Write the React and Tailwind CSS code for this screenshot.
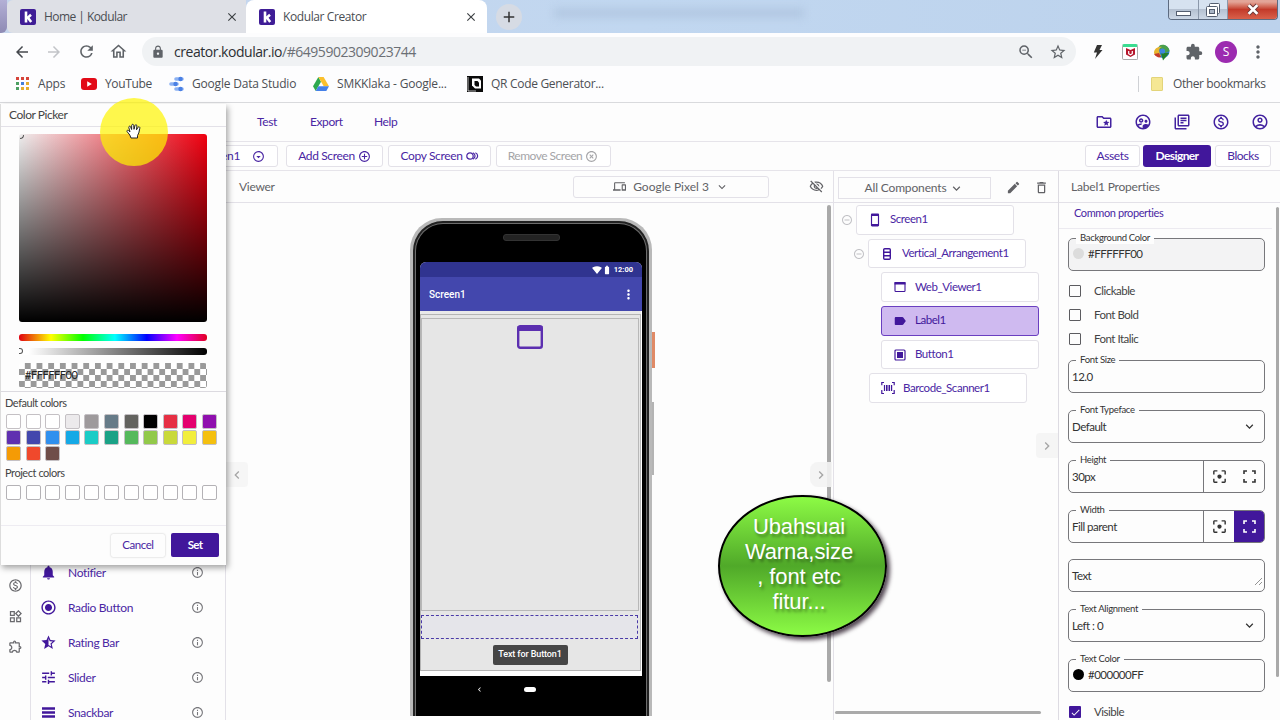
import React from "react";
import {
  MdArrowBack, MdArrowForward, MdRefresh, MdOutlineHome, MdLock, MdOutlineZoomOut, MdStarBorder, MdExtension, MdMoreVert,
  MdOutlineFolderSpecial, MdOutlineSupervisedUserCircle, MdOutlineLibraryBooks, MdOutlineMonetizationOn, MdOutlineAccountCircle,
  MdOutlineAddCircleOutline, MdOutlineArrowDropDownCircle, MdHighlightOff, MdDevices, MdKeyboardArrowDown, MdOutlineVisibilityOff,
  MdEdit, MdDeleteOutline, MdRemoveCircleOutline, MdStayCurrentPortrait, MdLabel, MdFilterCenterFocus,
  MdOutlineWidgets, MdOutlineExtension, MdNotifications, MdRadioButtonChecked, MdStarHalf, MdTune, MdOutlineInfo,
  MdChevronLeft, MdChevronRight, MdClose, MdAdd, MdSignalWifi4Bar, MdBatteryFull, MdCheck,
} from "react-icons/md";

const chromeFont = "font-['Open_Sans','Noto_Sans',sans-serif]";
const appFont = "font-['Lato','Open_Sans',sans-serif]";

function KLogo() {
  return (
    <svg width="16" height="16" viewBox="0 0 16 16" className="shrink-0">
      <rect width="16" height="16" rx="2" fill="#3f1d96" />
      <path d="M6 2.500v11M11 5.800 7 9.400M8 8.800l3.200 4.200" stroke="#fff" strokeWidth="2.600" fill="none" />
    </svg>
  );
}

function TabBar() {
  return (
    <div className="flex h-[33px] shrink-0 bg-linear-to-r from-[#c6d5ec] via-[#c1d7f0] to-[#bcd2ec]">
      <div className="h-[33px] w-[7px] rounded-br-md bg-linear-to-b from-[#b3b0d6] to-[#8f8bb4]" />
      <div className="flex w-[239px] items-center rounded-l-md bg-[#dee0e6] pl-[13px] pr-[7px]">
        <KLogo />
        <span className="ml-2 flex-1 text-[12px] text-[#4a4d52] tracking-[-0.550px]">Home | Kodular</span>
        <MdClose className="size-[14px] text-[#3c4043]" />
      </div>
      <div className="flex w-[241px] items-center rounded-t-lg bg-white pl-[13px] pr-[9px]">
        <KLogo />
        <span className="ml-2 flex-1 text-[12px] text-[#4a4d52] tracking-[-0.400px]">Kodular Creator</span>
        <MdClose className="size-[14px] text-[#3c4043]" />
      </div>
      <div className="ml-[9px] mt-[4px] flex size-[26px] items-center justify-center rounded-full bg-[#d6dbe4]">
        <MdAdd className="size-[18px] text-[#333]" />
      </div>
      <div className="ml-[32px] mt-[9px] h-[8px] w-[250px] bg-[#9fb6d2]/50 blur-[4px]" />
      <div className="ml-auto mr-[2px] flex h-[20px] overflow-hidden rounded-b-[4px] border border-t-0 border-[#5d6b80]">
        <div className="flex w-[30px] items-end justify-center border-r border-[#8b98aa] bg-linear-to-b from-[#d6e2f0] from-45% via-[#b5c1d1] via-50% to-[#cdd8e6] pb-[3px]">
          <div className="h-[5px] w-[15px] border border-[#555f70] bg-white" />
        </div>
        <div className="flex w-[29px] items-center justify-center border-r border-[#8b98aa] bg-linear-to-b from-[#d6e2f0] from-45% via-[#b5c1d1] via-50% to-[#cdd8e6]">
          <svg width="16" height="16" viewBox="0 0 16 16" fill="#fff" stroke="#555f70">
            <rect x="4.500" y="1.500" width="10" height="10" rx="1" />
            <rect x="1.500" y="4.500" width="11" height="10" rx="1" />
            <rect x="4.500" y="7.500" width="5" height="4" fill="#aab6c6" />
          </svg>
        </div>
        <div className="flex w-[49px] items-center justify-center bg-linear-to-b from-[#e3a598] from-10% via-[#c33a2a] via-50% to-[#d9604a]">
          <svg width="14" height="13" viewBox="0 0 16 14">
            <path d="M3 2l10 10M13 2 3 12" stroke="#6b3a3a" strokeWidth="5" />
            <path d="M3 2l10 10M13 2 3 12" stroke="#fff" strokeWidth="3.200" />
          </svg>
        </div>
      </div>
    </div>
  );
}

function AddressBar() {
  return (
    <div className="flex h-[37px] shrink-0 items-center bg-[#fdfdfe] text-[#5f6368]">
      <MdArrowBack className="ml-[13px] size-[18px] text-[#45484d]" />
      <MdArrowForward className="ml-[14px] size-[18px] text-[#c2c4c8]" />
      <MdRefresh className="ml-[14px] size-[19px]" />
      <MdOutlineHome className="ml-[13px] size-[19px]" />
      <div className="ml-[14px] flex h-[29px] w-[934px] items-center rounded-full bg-[#f0f2f4] pl-[9px] pr-[9px]">
        <MdLock className="size-[14px]" />
        <span className="ml-[9px] flex-1 text-[14px] tracking-[-0.470px] text-[#6b6f75]">
          <span className="text-[#2c2f33]">creator.kodular.io</span>/#6495902309023744
        </span>
        <MdOutlineZoomOut className="size-[18px]" />
        <MdStarBorder className="ml-[14px] size-[18px]" />
      </div>
      <svg width="10" height="14" viewBox="0 0 10 14" className="ml-[17px]"><path d="M4 0h5L6.500 5H9.500L2 14 4 7.500H.8z" fill="#333" /></svg>
      <div className="ml-[19px] flex h-[16px] w-[16px] items-center justify-center rounded-[2px] border border-t-[3px] border-[#aaa] border-t-[#3bdc91] bg-white">
        <svg width="9" height="9" viewBox="0 0 9 9"><path d="M0 0l4.500 2L9 0v6.500L4.500 9 0 6.500z" fill="#b5172c" /><path d="M2.700 3v2.700l1.800 1 1.800-1V3" stroke="#fff" strokeWidth="1.200" fill="none" /></svg>
      </div>
      <svg width="18" height="18" viewBox="0 0 18 18" className="ml-[15px]">
        <circle cx="10" cy="8.500" r="6.500" fill="#2f7fc6" />
        <path d="M6 3c4-3 10 0 10.500 5l-4 2-5-4z" fill="#4aa04a" />
        <path d="M8 10h8l-6 7.500z" fill="#238029" />
        <path d="M1 10c0-5 5-7 8-6-4 1-3 5-1 9-3 1-6 0-7-3z" fill="#e8b62e" />
        <path d="M1 11c2 3 5 4 7 3l-2-4z" fill="#c33a2a" />
        <circle cx="9.500" cy="8" r="2.600" fill="#3f86dd" />
      </svg>
      <MdExtension className="ml-[14px] size-[18px]" />
      <div className="ml-[12px] flex size-[22px] items-center justify-center rounded-full bg-[#9c2bb0] text-[12px] text-white">S</div>
      <MdMoreVert className="ml-[11px] size-[20px]" />
    </div>
  );
}

function Bookmarks() {
  const dots = ["#d6443a", "#d6443a", "#d6443a", "#4c9f62", "#4480d9", "#e4ad2d", "#4c9f62", "#e4ad2d", "#e4ad2d"];
  return (
    <div className="flex h-[33px] shrink-0 items-center border-b border-[#d9dadd] bg-[#fdfdfe] pb-[5px] text-[12px] tracking-[-0.200px] text-[#4c4f54]">
      <div className="ml-[16px] grid w-[13px] grid-cols-3 gap-[2px]">
        {dots.map((c, i) => <div key={i} className="size-[3px]" style={{ background: c }} />)}
      </div>
      <span className="ml-[9px] w-[43px]">Apps</span>
      <svg width="16" height="12" viewBox="0 0 16 12"><rect width="16" height="12" rx="3" fill="#e20a17" /><path d="M6.200 3.300v5.400L10.800 6z" fill="#fff" /></svg>
      <span className="ml-[8px] w-[63px] tracking-[-0.350px]">YouTube</span>
      <svg width="16" height="16" viewBox="0 0 16 16">
        <path d="M8 3h6M3 8h6M8 13h6" stroke="#8cb1f2" strokeWidth="3.600" strokeLinecap="round" />
        <circle cx="12.500" cy="3" r="2.200" fill="#4a80e4" /><circle cx="7.500" cy="8" r="2.200" fill="#4a80e4" /><circle cx="12.500" cy="13" r="2.200" fill="#4a80e4" />
      </svg>
      <span className="ml-[8px] w-[121px]">Google Data Studio</span>
      <svg width="16" height="14" viewBox="0 0 16 14"><path d="M5.400 0 0 9.300 2.700 14 8 4.700z" fill="#2da94f" /><path d="M5.400 0h5.200L16 9.300h-5.300z" fill="#fbc02d" /><path d="M5.400 9.300H16L13.300 14H2.700z" fill="#4480e8" /></svg>
      <span className="ml-[8px] w-[130px]">SMKKlaka - Google...</span>
      <svg width="16" height="16" viewBox="0 0 16 16"><rect width="16" height="16" fill="#0a0a0a" /><path d="M5 2.500h7l2 2v8H8l-3-3z" fill="#fff" /><path d="M7.500 5h3L12 6.500v4H9L7.500 9z" fill="#0a0a0a" /><path d="M1 1v14h8" fill="none" stroke="#fff" strokeWidth=".7" /></svg>
      <span className="ml-[8px] tracking-[-0.300px]">QR Code Generator...</span>
      <div className="ml-auto h-[16px] w-px bg-[#cfd1d5]" />
      <div className="ml-[12px] h-[14px] w-[12px] rounded-[1px] border border-[#e3d47a] bg-[#f5e794]" />
      <span className="ml-[10px] w-[107px] tracking-[-0.400px]">Other bookmarks</span>
    </div>
  );
}

function MenuBar() {
  return (
    <div className="flex h-[39px] shrink-0 items-center border-b border-[#e6e4ea] pl-[257px] text-[12px] tracking-[-0.400px] text-[#4a26a3]">
      <span className="mb-px w-[53px]">Test</span>
      <span className="mb-px w-[64px]">Export</span>
      <span className="mb-px">Help</span>
      <div className="ml-auto flex gap-[21px] pr-[11px] text-[#4322a0]">
        <MdOutlineFolderSpecial className="size-[18px]" />
        <MdOutlineSupervisedUserCircle className="size-[18px]" />
        <MdOutlineLibraryBooks className="size-[18px]" />
        <MdOutlineMonetizationOn className="size-[18px]" />
        <MdOutlineAccountCircle className="size-[18px]" />
      </div>
    </div>
  );
}

function ToolBar() {
  const b = "flex h-[22px] items-center justify-center gap-[3px] rounded-[3px] border border-[#e3e1e8] bg-white";
  return (
    <div className="flex h-[29px] shrink-0 items-center border-b border-[#e6e4ea] text-[12px] tracking-[-0.350px] text-[#4a26a3]">
      <div className={`${b} ml-[150px] w-[128px] justify-end gap-[12px]! pr-[12px]`}>Screen1<MdOutlineArrowDropDownCircle className="size-[13px]" /></div>
      <div className={`${b} ml-[8px] w-[97px]`}>Add Screen<MdOutlineAddCircleOutline className="size-[13px]" /></div>
      <div className={`${b} ml-[5px] w-[103px]`}>Copy Screen
        <svg width="13" height="12" viewBox="0 0 13 12" fill="none" stroke="currentColor" strokeWidth="1.200"><circle cx="4" cy="6" r="3.200" /><path d="M6.800 2.800c3 1.300 3 5.100 0 6.400M9.400 2.800c3 1.300 3 5.100 0 6.400" /></svg>
      </div>
      <div className={`${b} ml-[5px] w-[115px] pr-[1px] text-[#a5a5a8] tracking-[-0.500px]!`}>Remove Screen<MdHighlightOff className="size-[13px]" /></div>
      <div className={`${b} ml-auto w-[55px]`}>Assets</div>
      <div className="ml-[3px] flex h-[22px] w-[68px] items-center justify-center rounded-[3px] bg-[#41179b] font-bold tracking-[-0.600px] text-white">Designer</div>
      <div className={`${b} ml-[4px] mr-[9px] w-[56px] tracking-[-0.500px]!`}>Blocks</div>
    </div>
  );
}

function BarsIcon() {
  return <svg width="17" height="17" viewBox="0 0 17 17" stroke="#41179b" strokeWidth="2.400"><path d="M2 4.500h13M2 8.500h13M2 12.500h13" /></svg>;
}

function Palette() {
  const rows = [
    [MdNotifications, "Notifier"], [MdRadioButtonChecked, "Radio Button"], [MdStarHalf, "Rating Bar"], [MdTune, "Slider"], [BarsIcon, "Snackbar"],
  ];
  return (
    <div className="flex w-[226px] shrink-0 overflow-hidden border-r border-[#e3e1e8]">
      <div className="flex w-[31px] shrink-0 flex-col items-center gap-[15.500px] border-r border-[#e3e1e8] pt-[407px] text-[#6a6a6e]">
        <MdOutlineMonetizationOn className="size-[15px] shrink-0" />
        <MdOutlineWidgets className="size-[15px] shrink-0" />
        <MdOutlineExtension className="size-[15px] shrink-0" />
      </div>
      <div className="flex flex-1 flex-col pt-[384px]">
        {rows.map(([Icon, name]) => (
          <div key={name} className="flex h-[35px] shrink-0 items-center pl-[9px] pr-[21px] text-[12px] leading-[14px] tracking-[-0.350px] text-[#4a26a3]">
            <Icon className="size-[17px] text-[#41179b]" />
            <span className="ml-[11px] flex-1">{name}</span>
            <MdOutlineInfo className="size-[13px] text-[#77777b]" />
          </div>
        ))}
      </div>
    </div>
  );
}

function Phone() {
  return (
    <div className="relative ml-[184px] h-[498px] w-[242px] shrink-0 rounded-t-[32px] bg-[#b9b9b9] p-[3px] pb-0">
      <div className="absolute left-[242px] top-[114px] h-[36px] w-[3px] bg-[#e08a66]" />
      <div className="absolute left-[242px] top-[184px] h-[73px] w-[2px] bg-[#b4b4b4]" />
      <div className="h-full rounded-t-[30px] bg-[#222] p-[2px] pb-0">
        <div className="h-full rounded-t-[28px] bg-[#6d6d6d] p-px pb-0">
          <div className="h-full rounded-t-[27px] bg-black px-[4px]">
            <div className="flex h-[38px] justify-center pt-[10px]"><div className="h-[7px] w-[57px] rounded-[3px] border border-[#333] bg-[#232323]" /></div>
            <div className="w-[222px] overflow-hidden rounded-t-[6px] bg-[#e9e9e9] text-white">
              <div className="flex h-[15px] items-center justify-end bg-[#303490] pr-[9px] pt-px text-[7.500px] font-bold">
                <MdSignalWifi4Bar className="size-[10px]" /><MdBatteryFull className="mr-[2px] size-[10px]" /><span className="font-['Roboto',sans-serif]">12:00</span>
              </div>
              <div className="flex h-[34px] items-center justify-between bg-[#4347ad] pl-[9px] pr-[6px] font-['Roboto',sans-serif] text-[10px] font-medium">
                Screen1<MdMoreVert className="size-[15px]" />
              </div>
              <div className="h-[365px] border-r border-white pt-[3px]">
                <div className="flex h-[357px] flex-col items-center border border-[#b4b4b4] bg-[#e6e6e6] pt-[3px]">
                  <div className="mr-px flex h-[293px] w-[218px] justify-center border border-[#b8b8b8] bg-[#e6e6e6] pt-[5px]">
                    <svg width="28" height="26" viewBox="0 0 28 26"><rect x="2.200" y="2.200" width="23.600" height="21.600" rx="2" fill="none" stroke="#5c2fb0" strokeWidth="2.400" /><path d="M1.500 2h25v5h-25z" fill="#5c2fb0" /></svg>
                  </div>
                  <div className="mr-[2px] mt-[4px] h-[24px] w-[217px] border border-dashed border-[#4a3aa8] bg-[#e5e5ea]" />
                  <div className="mr-px mt-[6px] flex h-[20px] w-[75px] items-center justify-center rounded-[2px] bg-[#454545] font-['Roboto',sans-serif] text-[9px] font-medium tracking-[-0.100px]">Text for Button1</div>
                </div>
                <div className="h-[5px] bg-white" />
              </div>
            </div>
            <div className="flex h-[26px] items-center pl-[55px] text-white">
              <MdChevronLeft className="size-[9px]" />
              <div className="ml-[40px] h-[5px] w-[12px] rounded-full bg-white" />
            </div>
          </div>
        </div>
      </div>
    </div>
  );
}

function Viewer() {
  return (
    <div className="relative flex w-[608px] shrink-0 flex-col overflow-hidden border-r border-[#e3e1e8]">
      <div className="flex h-[32px] shrink-0 items-center border-b border-[#e3e1e8] pl-[13px] text-[12px] text-[#626266]">
        <span className="w-[334px] tracking-[-0.300px]">Viewer</span>
        <div className="flex h-[22px] w-[196px] items-center justify-center rounded-[3px] border border-[#e3e1e8]">
          <MdDevices className="mr-[7px] size-[13px]" />Google Pixel 3<MdKeyboardArrowDown className="ml-[6px] size-[14px]" />
        </div>
        <MdOutlineVisibilityOff className="ml-[40px] size-[15px]" />
      </div>
      <div className="flex flex-1 flex-col overflow-hidden pt-[15px]"><Phone /></div>
      <div className="absolute left-[601px] top-[34px] h-[477px] w-[4px] rounded bg-[#a9a9a9]" />
      <div className="absolute left-0 top-[291px] flex h-[25px] w-[22px] items-center justify-center rounded-r bg-[#f6f6f6]"><MdChevronLeft className="size-[16px] text-[#a5a5a5]" /></div>
      <div className="absolute left-[584px] top-[291px] flex h-[25px] w-[22px] items-center justify-center rounded-l-lg bg-[#f3f3f3]/90"><MdChevronRight className="size-[16px] text-[#a5a5a5]" /></div>
    </div>
  );
}

function VerticalIcon() {
  return <svg width="14" height="14" viewBox="0 0 14 14" fill="none" stroke="#41179b" strokeWidth="1.400" className="shrink-0"><rect x="3.700" y="1.700" width="6.600" height="10.600" rx="1" /><path d="M4 5.200h6M4 8.800h6" /></svg>;
}
function WebIcon() {
  return <svg width="14" height="14" viewBox="0 0 14 14" className="shrink-0"><rect x="2" y="2.500" width="10" height="9" rx=".8" fill="none" stroke="#41179b" strokeWidth="1.100" /><path d="M1.500 2h11v2.500h-11z" fill="#41179b" /></svg>;
}
function ButtonIcon() {
  return <svg width="14" height="14" viewBox="0 0 14 14" className="shrink-0"><rect x="2" y="2" width="10" height="10" rx="1" fill="none" stroke="#41179b" strokeWidth="1.200" /><path d="M4 4h6v6H4z" fill="#41179b" /></svg>;
}
function BarcodeIcon() {
  return <svg width="14" height="14" viewBox="0 0 14 14" fill="none" stroke="#41179b" className="shrink-0"><path d="M3 1.500H.8v11H3M11 1.500h2.200v11H11" strokeWidth="1.200" strokeDasharray="5 4.700 5.700 0" /><path d="M3.500 4v6M10.600 4v6" strokeWidth="1.200" /><path d="M5.800 4v6M8.300 4v6" strokeWidth="1.600" /></svg>;
}

function Tree() {
  const items = [
    [22, MdStayCurrentPortrait, "Screen1", true, false],
    [34, VerticalIcon, "Vertical_Arrangement1", true, false],
    [47, WebIcon, "Web_Viewer1", false, false],
    [47, MdLabel, "Label1", false, true],
    [47, ButtonIcon, "Button1", false, false],
    [35, BarcodeIcon, "Barcode_Scanner1", false, false],
  ];
  return (
    <div className="relative flex w-[225px] shrink-0 flex-col border-r border-[#dddbe2]">
      <div className="flex h-[32px] shrink-0 items-center border-b border-[#e3e1e8] pl-[4px] text-[12px] tracking-[-0.150px] text-[#626266]">
        <div className="mt-[3px] flex h-[22px] w-[153px] items-center justify-center border border-[#e3e1e8]">All Components<MdKeyboardArrowDown className="ml-[3px] size-[15px]" /></div>
        <MdEdit className="ml-[15px] mt-[2px] size-[15px]" />
        <MdDeleteOutline className="ml-[13px] mt-[2px] size-[15px]" />
      </div>
      <div className="flex flex-col gap-[4px] pt-[2px]">
        {items.map(([x, Icon, name, toggle, on]) => (
          <div key={name} className="flex items-center" style={{ paddingLeft: toggle ? x - 15 : x }}>
            {toggle && <MdRemoveCircleOutline className="mr-[3px] size-[12px] text-[#c2c2c6]" />}
            <div className={on
              ? "flex h-[29.700px] w-[158px] items-center rounded-[3px] border border-[#6a3fc0] bg-[#cfbaf0] pl-[11px] text-[11.500px] tracking-[-0.450px] text-[#41179b]"
              : "flex h-[29.700px] w-[158px] items-center rounded-[3px] border border-[#e3e1e8] bg-white pl-[11px] text-[11.500px] tracking-[-0.450px] text-[#4a26a3]"}>
              <Icon className="size-[14px] shrink-0 text-[#41179b]" />
              <span className="mb-[2px] ml-[8px]">{name}</span>
            </div>
          </div>
        ))}
      </div>
      <div className="absolute left-[1px] top-[540px] h-[3px] w-[206px] rounded bg-[#a9a9a9]" />
      <div className="absolute left-[202px] top-[262px] flex h-[25px] w-[22px] items-center justify-center rounded-l bg-[#f5f5f5]"><MdChevronRight className="size-[16px] text-[#a5a5a5]" /></div>
    </div>
  );
}

function Field({ label, children, gap, tint }) {
  return (
    <div className={`relative flex h-[33px] w-[197px] shrink-0 items-center rounded-[5px] border border-[#77777b] pl-[3px] text-[#333] ${tint ? "bg-[#f3f3f4]" : ""}`} style={{ marginTop: gap }}>
      {label && <span className="absolute -top-[7px] left-[7px] bg-[#fdfdfd] px-[4px] text-[9.500px] leading-[12px] tracking-[-0.300px]">{label}</span>}
      {children}
    </div>
  );
}

function Check({ on, label }) {
  return (
    <div className="flex h-[24px] shrink-0 items-center text-[11.500px] leading-[14px] text-[#444]">
      {on
        ? <div className="ml-px flex size-[12px] items-center justify-center rounded-[1px] bg-[#41179b]"><MdCheck className="size-[11px] text-white" /></div>
        : <div className="ml-px size-[12px] rounded-[1px] border-[1.500px] border-[#5c5c60]" />}
      <span className="ml-[13px]">{label}</span>
    </div>
  );
}

function CornersIcon() {
  return <svg width="17" height="17" viewBox="0 0 17 17" fill="none" stroke="currentColor" strokeWidth="1.600"><path d="M6 3H3v3M11 3h3v3M6 14H3v-3M11 14h3v-3" /></svg>;
}

function SizeButtons({ fill }) {
  return (
    <div className="ml-auto flex h-full">
      <div className="flex w-[31px] items-center justify-center border-l border-[#77777b]"><MdFilterCenterFocus className="size-[17px]" /></div>
      <div className={fill ? "flex w-[30px] items-center justify-center rounded-r-[4px] bg-[#41179b] text-white" : "flex w-[30px] items-center justify-center"}><CornersIcon /></div>
    </div>
  );
}

function Properties() {
  return (
    <div className="relative flex flex-1 flex-col overflow-hidden text-[11.500px]">
      <div className="flex h-[32px] shrink-0 items-center border-b border-[#e3e1e8] pl-[12px] text-[12px] tracking-[-0.200px] text-[#626266]">Label1 Properties</div>
      <div className="mr-[8px] flex h-[26px] shrink-0 items-center border-b border-[#eceaf0] pb-[5px] pl-[15px] text-[11px] tracking-[-0.400px] text-[#4a26a3]">Common properties</div>
      <div className="flex flex-col pl-[9px] tracking-[-0.500px]">
        <Field label="Background Color" gap={9} tint><span className="mb-[2px] ml-px flex items-center"><span className="mr-[4px] size-[11px] rounded-full bg-[#dcdcdc]" />#FFFFFF00</span></Field>
        <div className="mt-[8px] flex flex-col"><Check label="Clickable" /><Check label="Font Bold" /><Check label="Font Italic" /></div>
        <Field label="Font Size" gap={9}>12.0</Field>
        <Field label="Font Typeface" gap={17}>Default<MdKeyboardArrowDown className="ml-auto mr-[7px] size-[15px]" /></Field>
        <Field label="Height" gap={17}>30px<SizeButtons /></Field>
        <Field label="Width" gap={17}>Fill parent<SizeButtons fill /></Field>
        <Field gap={16}>Text
          <svg width="9" height="9" viewBox="0 0 9 9" className="ml-auto mr-px mt-[12px]" stroke="#777" strokeWidth=".8"><path d="M1 8l7-7M5 8l3-3" /></svg>
        </Field>
        <Field label="Text Alignment" gap={17}>Left : 0<MdKeyboardArrowDown className="ml-auto mr-[7px] size-[15px]" /></Field>
        <Field label="Text Color" gap={17}><span className="mb-[2px] ml-px flex items-center"><span className="mr-[4px] size-[11px] rounded-full bg-black" />#000000FF</span></Field>
        <div className="mt-[8px]"><Check on label="Visible" /></div>
      </div>
      <div className="absolute left-[217px] top-[36px] h-[470px] w-[3px] rounded bg-[#a9a9a9]" />
    </div>
  );
}

function ColorPicker() {
  const colors = ["#fff", "#fff", "#fff", "#eceaec", "#9e9a9c", "#667b88", "#63635f", "#000", "#e62f44", "#e4006e", "#8f0fae",
    "#6030b0", "#4347ad", "#3090ee", "#15a9e6", "#1accc6", "#1aa286", "#55b95c", "#92c94a", "#c9d93a", "#f2ee3c", "#f4c00f",
    "#f59b05", "#f0492c", "#6f4d49"];
  return (
    <div className="absolute left-0 top-[104px] flex h-[461px] w-[226px] flex-col border-l border-[#ddd] bg-[#fdfdfd] tracking-[-0.450px] text-[#444] shadow-[2px_3px_6px_rgba(0,0,0,0.35)]">
      <div className="flex h-[23px] shrink-0 items-center border-b border-[#e3e1e8] pl-[8px] text-[12px]">Color Picker</div>
      <div className="mt-[7px] ml-[18px] h-[188px] w-[188px] shrink-0 rounded-[3px] bg-[linear-gradient(to_top,#000,transparent),linear-gradient(to_right,#eee,#f00010)]">
        <div className="mt-px ml-px size-[4px] rounded-br-full border-b border-r border-[#555]" />
      </div>
      <div className="mt-[12px] ml-[18px] h-[7px] w-[188px] shrink-0 rounded-[3px] bg-[linear-gradient(to_right,#e00010,#ff0_17%,#0f0_34%,#0ff_51%,#00f_68%,#f0f_84%,#e00020)]" />
      <div className="mt-[7px] ml-[18px] h-[7px] w-[188px] shrink-0 rounded-[3px] bg-[linear-gradient(to_right,#fff_5%,#000)]">
        <div className="h-[6px] w-[4px] rounded-r-full border-y border-r border-[#555]" />
      </div>
      <div className="mt-[8px] ml-[18px] flex h-[25px] w-[188px] shrink-0 items-center rounded-[3px] bg-[repeating-conic-gradient(#9a9a9a_0_25%,#fff_0_50%)] bg-[length:11.700px_12px] pl-[6px] text-[11px] text-[#222]">#FFFFFF00</div>
      <div className="mt-[3px] border-t border-[#dcdae0] pl-[4px] pt-[4px] text-[11px] leading-[14px]">Default colors</div>
      <div className="ml-[5px] mt-[4px] grid w-[215.600px] grid-cols-11 gap-y-[1px]">
        {colors.map((c, i) => <div key={i} className="size-[15px] rounded-[2px] border border-[#c4c0c4]" style={{ background: c }} />)}
      </div>
      <div className="mt-[5px] pl-[4px] text-[11px] leading-[14px]">Project colors</div>
      <div className="ml-[5px] mt-[5px] grid w-[215.600px] grid-cols-11">
        {Array.from({ length: 11 }, (_, i) => <div key={i} className="size-[15px] rounded-[2px] border border-[#b4b2b6] bg-white" />)}
      </div>
      <div className="mt-auto flex h-[40px] shrink-0 items-center justify-end gap-[6px] border-t border-[#eeecf2] pb-px pr-[7px] text-[11.500px]">
        <div className="flex h-[23px] w-[54px] items-center justify-center rounded-[2px] text-[#4a26a3] shadow-[0_0_2px_rgba(0,0,0,0.25)]">Cancel</div>
        <div className="flex h-[24px] w-[48px] items-center justify-center rounded-[2px] bg-[#41179b] font-bold tracking-[-0.700px] text-white">Set</div>
      </div>
      <div className="absolute left-[99px] -top-[6px] size-[68px] rounded-full bg-[#fff500]/70" />
      <svg width="16" height="16" viewBox="0 0 16 16" className="absolute left-[125px] top-[19px]" fill="#fff" stroke="#222" strokeWidth="1" strokeLinejoin="round">
        <path d="M5 15 L3.800 12 1 8.500C.5 7.300 2 6.800 2.800 7.800L4 9 2.800 4.500C2.600 3 4.200 2.700 4.700 4L5.600 6.500 5.700 2.300C5.800 1 7.500 1 7.700 2.300L8 6.300 9 2.500C9.400 1.200 11 1.600 10.900 3L10.500 6.800 12 4.300C12.800 3.200 14.200 4 13.800 5.300L12.800 10 11.500 12.500V15z" />
      </svg>
    </div>
  );
}

export default function App() {
  return (
    <div className={`relative flex h-[720px] w-[1280px] flex-col overflow-hidden bg-[#fdfdfd] whitespace-nowrap ${appFont}`}>
      <div className={`flex flex-col ${chromeFont}`}>
        <TabBar />
        <AddressBar />
        <Bookmarks />
      </div>
      <MenuBar />
      <ToolBar />
      <div className="flex h-[549px] shrink-0 overflow-hidden">
        <Palette />
        <Viewer />
        <Tree />
        <Properties />
      </div>
      <ColorPicker />
      <div className="absolute left-[718px] top-[495px] flex h-[142px] w-[169px] flex-col items-center justify-center rounded-[50%] border-2 border-black bg-linear-to-b from-[#8dfb45] via-[#50a929] to-[#8cfb45] pb-[4px] pr-[7px] text-center font-['Liberation_Sans',Arial,sans-serif] text-[22px] leading-[25px] tracking-[-0.100px] text-white shadow-[3px_3px_4px_rgba(30,15,30,0.75)] [text-shadow:2px_3px_3px_rgba(0,0,0,0.35)]">
        <span>Ubahsuai</span><span>Warna,size</span><span>, font etc</span><span>fitur...</span>
      </div>
    </div>
  );
}
